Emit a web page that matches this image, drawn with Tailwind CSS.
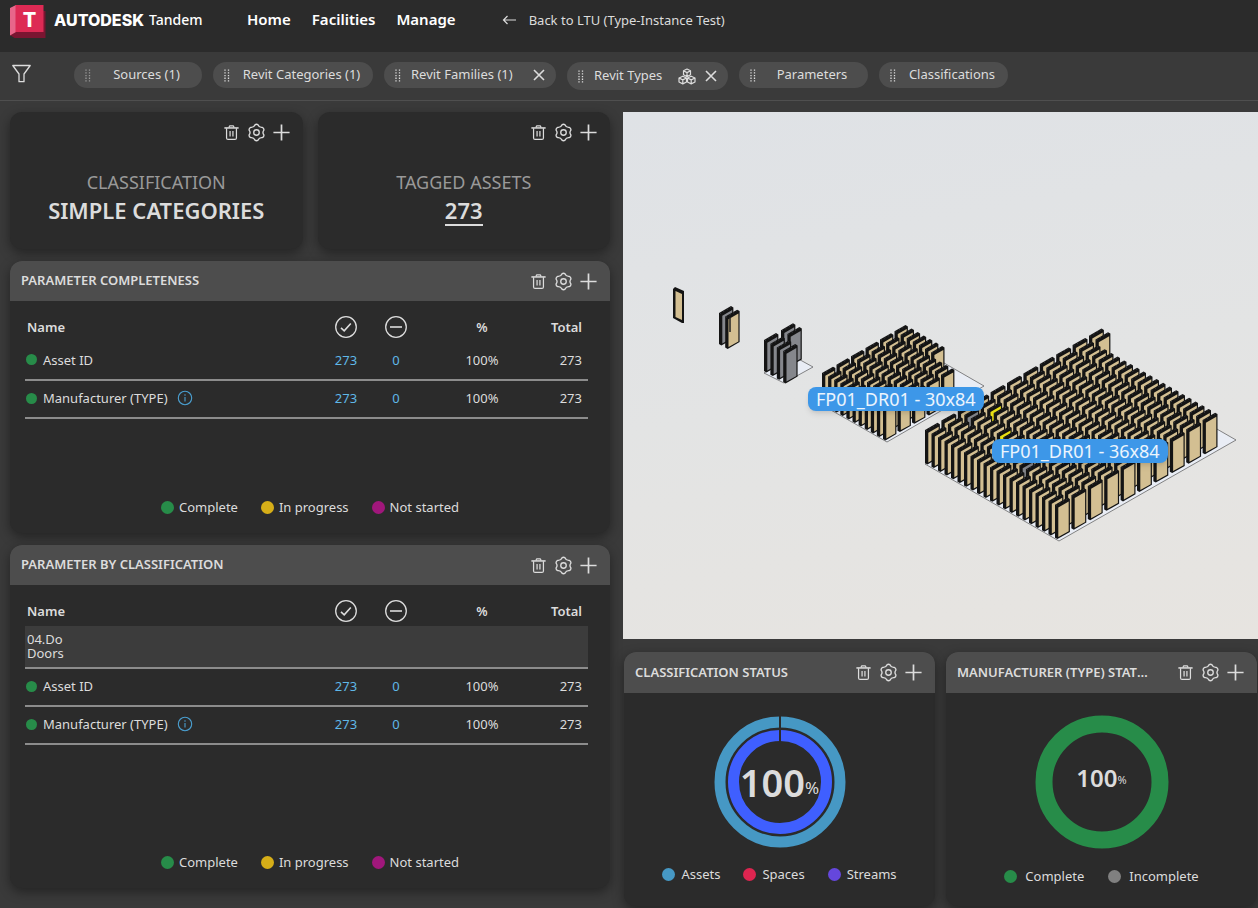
<!DOCTYPE html>
<html lang="en">
  <head>
    <meta charset="utf-8" />
    <meta name="viewport" content="width=device-width, initial-scale=1" />
    <title>Autodesk Tandem - Dashboard</title>
    <script src="https://cdn.jsdelivr.net/npm/@tailwindcss/browser@4"></script>
  </head>
  <body class="min-h-screen bg-[#3a3a3a] font-['Noto_Sans',sans-serif] text-[13px] leading-4 text-[#dcdcdc]">
    <!-- Icon sprite -->
    <svg class="hidden" aria-hidden="true">
      <symbol id="i-trash" viewBox="0 0 20 20">
        <g fill="none" stroke="currentColor" stroke-width="1.3" stroke-linejoin="round">
          <path d="M2.500 5.200h15" stroke-width="1.6" />
          <path d="M7.300 4.800 8 3h4l.7 1.800M4.800 5.500v10.200q0 1.600 1.600 1.600h7.200q1.600 0 1.600-1.600V5.500M8.500 8.500v5.600M11.500 8.500v5.600" />
        </g>
      </symbol>
      <symbol id="i-gear" viewBox="-10 -10 20 20">
        <g fill="none" stroke="currentColor" stroke-width="1.4" stroke-linejoin="round">
          <path d="M-1.66-8.02Q0-9.300 1.660-8.020Q2.900-5.020 6.100-5.450Q8.050-4.650 7.780-2.570Q5.800 0 7.780 2.570Q8.050 4.650 6.100 5.450Q2.900 5.020 1.660 8.020Q0 9.300-1.660 8.020Q-2.900 5.020-6.100 5.450Q-8.050 4.650-7.780 2.570Q-5.800 0-7.780-2.570Q-8.050-4.650-6.100-5.450Q-2.900-5.020-1.660-8.020Z" />
          <circle r="2.900" />
        </g>
      </symbol>
      <symbol id="i-plus" viewBox="0 0 20 20">
        <path d="M10 1.500v17M1.500 10h17" fill="none" stroke="currentColor" stroke-width="1.8" />
      </symbol>
      <symbol id="i-close" viewBox="0 0 12 12">
        <path d="M1 1l10 10M11 1 1 11" fill="none" stroke="currentColor" stroke-width="1.6" />
      </symbol>
      <symbol id="i-grip" viewBox="0 0 6 13">
        <path d="M1 .5v13M4.500 .5v13" fill="none" stroke="currentColor" stroke-width="1.3" stroke-dasharray="1.3 1.4" />
      </symbol>
      <symbol id="i-check" viewBox="0 0 24 24">
        <g fill="none" stroke="currentColor" stroke-width="1.3">
          <circle cx="12" cy="12" r="10.300" />
          <path d="M7 12.800l3.200 3 6.600-7.300" stroke-width="1.6" />
        </g>
      </symbol>
      <symbol id="i-minus" viewBox="0 0 24 24">
        <g fill="none" stroke="currentColor" stroke-width="1.3">
          <circle cx="12" cy="12" r="10.300" />
          <path d="M6 12h12" stroke-width="1.6" />
        </g>
      </symbol>
      <symbol id="i-info" viewBox="0 0 16 16">
        <g fill="none" stroke="currentColor" stroke-width="1.1">
          <circle cx="8" cy="8" r="6.700" />
          <path d="M8 7v4.600M8 4.300v1.400" />
        </g>
      </symbol>
      <symbol id="i-cubes" viewBox="0 0 18 17">
        <g fill="none" stroke="currentColor" stroke-width="1.2" stroke-linejoin="round">
          <path d="M9 1l3.500 1.800v4L9 8.600 5.500 6.800v-4zM5.500 2.800 9 4.600l3.500-1.800M9 4.600v4" />
          <path d="M4.800 8.200l3.700 1.800v4l-3.700 1.900L1 14v-4zM1 10l3.800 1.900L8.500 10M4.800 11.900v4" />
          <path d="M13.200 8.200L17 10v4l-3.800 1.900L9.500 14v-4zM9.500 10l3.700 1.900L17 10M13.200 11.900v4" />
        </g>
      </symbol>
    </svg>

    <!-- Top bar -->
    <header class="flex h-[52px] items-center bg-[#2b2b2b] pb-3 pl-[10px]">
      <svg class="mt-1 h-9 w-9 shrink-0" viewBox="0 0 36 34">
        <path d="M3 27h24V6h8.500v27H4.500L0 30z" fill="#7a1531" />
        <path d="M0 3 6 0v27l-6 3.500z" fill="#e8668a" />
        <path d="M5.500 0H33.500v27H5.500z" fill="#dd2a54" />
        <text x="19.500" y="22" text-anchor="middle" fill="#fff" font-family="Inter, sans-serif" font-weight="800" font-size="20">T</text>
      </svg>
      <div class="ml-2 flex w-[193px] items-center gap-[5px] text-white">
        <span class="font-['Inter',sans-serif] text-[16px] font-extrabold">AUTODESK</span>
        <span class="text-[14px] font-medium">Tandem</span>
      </div>
      <nav class="flex gap-[21px] pb-0.5 text-[15px] font-semibold text-white">
        <a href="#">Home</a>
        <a href="#">Facilities</a>
        <a href="#">Manage</a>
      </nav>
      <a href="#" class="ml-[46px] flex items-center gap-[13px]">
        <svg class="h-3 w-[14px]" viewBox="0 0 14 12" fill="none" stroke="currentColor" stroke-width="1.2"><path d="M14 6H1.500M5.500 2l-4 4 4 4" /></svg>
        Back to LTU (Type-Instance Test)
      </a>
    </header>

    <!-- Filter bar -->
    <div class="flex h-[49px] items-start border-b border-[#4f4f4f] pt-[10px] pl-3">
      <button class="mt-0.5 mr-[43px]" aria-label="Filter">
        <svg class="block h-5 w-[19px]" viewBox="0 0 19 20" fill="none" stroke="currentColor" stroke-width="1.3" stroke-linejoin="round"><path d="M.8 1.500h17.400l-6.200 8.500v7.700H7V10z" /></svg>
      </button>
      <div class="flex items-start gap-[11px]">
        <button class="flex h-[26px] w-[128px] items-center rounded-full bg-[#4d4d4d] pl-[11px]">
          <svg class="h-[13px] w-[6px] text-[#999]"><use href="#i-grip" /></svg><span class="flex-1 pb-0.5">Sources (1)</span>
        </button>
        <button class="flex h-[26px] w-[160px] items-center rounded-full bg-[#4d4d4d] pl-[11px]">
          <svg class="h-[13px] w-[6px]"><use href="#i-grip" /></svg><span class="flex-1 pb-0.5">Revit Categories (1)</span>
        </button>
        <div class="flex h-[26px] w-[172px] items-center rounded-full bg-[#4d4d4d] pr-[11px] pl-[11px]">
          <svg class="h-[13px] w-[6px]"><use href="#i-grip" /></svg><span class="flex-1 pb-0.5 pl-[10px]">Revit Families (1)</span>
          <button aria-label="Remove Revit Families"><svg class="block h-3 w-3"><use href="#i-close" /></svg></button>
        </div>
        <div class="flex h-7 w-[161px] items-center rounded-full bg-[#4d4d4d] pr-[11px] pl-[11px]">
          <svg class="h-[13px] w-[6px]"><use href="#i-grip" /></svg><span class="flex-1 pb-0.5 pl-[10px]">Revit Types</span>
          <button class="mr-[9px]" aria-label="Group by type"><svg class="block h-[17px] w-[18px]"><use href="#i-cubes" /></svg></button>
          <button aria-label="Remove Revit Types"><svg class="block h-3 w-3"><use href="#i-close" /></svg></button>
        </div>
        <button class="flex h-[26px] w-[129px] items-center rounded-full bg-[#4d4d4d] pl-[11px]">
          <svg class="h-[13px] w-[6px]"><use href="#i-grip" /></svg><span class="flex-1 pb-0.5">Parameters</span>
        </button>
        <button class="flex h-[26px] w-[129px] items-center rounded-full bg-[#4d4d4d] pl-[11px]">
          <svg class="h-[13px] w-[6px]"><use href="#i-grip" /></svg><span class="flex-1 pb-0.5">Classifications</span>
        </button>
      </div>
    </div>

    <main class="grid grid-cols-[600fr_635fr] gap-[13px] pt-[11px] pl-[10px]">
      <!-- Left column -->
      <div class="flex flex-col gap-3">
        <div class="grid grid-cols-2 gap-[15px]">
          <section class="h-[137px] rounded-xl bg-[#2b2b2b] pt-2 text-center shadow-[0_4px_12px_rgba(0,0,0,0.4)]">
            <div class="flex justify-end pr-[9px]" data-tools></div>
            <h2 class="mt-[25px] text-[18px] leading-6 text-[#999]">CLASSIFICATION</h2>
            <p class="mt-0.5 text-[22px] leading-7 font-semibold">SIMPLE CATEGORIES</p>
          </section>
          <section class="h-[137px] rounded-xl bg-[#2b2b2b] pt-2 text-center shadow-[0_4px_12px_rgba(0,0,0,0.4)]">
            <div class="flex justify-end pr-[9px]" data-tools></div>
            <h2 class="mt-[25px] text-[18px] leading-6 text-[#999]">TAGGED ASSETS</h2>
            <a href="#" class="mt-0.5 inline-block border-b-2 border-[#dcdcdc] text-[22px] leading-7 font-semibold">273</a>
          </section>
        </div>

        <section class="flex h-[272px] flex-col rounded-xl bg-[#2b2b2b] shadow-[0_4px_12px_rgba(0,0,0,0.4)]">
          <div class="flex h-10 items-center justify-between rounded-t-xl bg-[#4d4d4d] pr-[9px] pl-[11px]">
            <h2 class="pb-0.5 font-semibold">PARAMETER COMPLETENESS</h2>
            <div class="flex" data-tools></div>
          </div>
          <div class="flex-1 pt-[10px] pr-[22px] pl-[15px]">
            <table class="w-full table-fixed">
              <colgroup><col /><col class="w-[62px]" /><col class="w-[38px]" /><col class="w-[134px]" /><col class="w-[39px]" /></colgroup>
              <thead>
                <tr class="h-[31px]">
                  <th class="pl-0.5 text-left font-semibold">Name</th>
                  <th aria-label="Complete"><svg class="mx-auto h-6 w-6"><use href="#i-check" /></svg></th>
                  <th aria-label="Not started"><svg class="mx-auto h-6 w-6"><use href="#i-minus" /></svg></th>
                  <th class="font-semibold">%</th>
                  <th><div class="flex justify-end pr-[6px] font-semibold">Total</div></th>
                </tr>
              </thead>
              <tbody class="text-center">
                <tr class="h-[38px] border-b-2 border-[#8c8c8c]">
                  <td class="pb-0.5"><div class="flex items-center pl-px"><span class="mr-[6px] h-[11px] w-[11px] rounded-full bg-[#278c49]"></span>Asset ID</div></td>
                  <td class="pb-0.5"><a href="#" class="text-[#5fb8e8]">273</a></td>
                  <td class="pb-0.5"><a href="#" class="text-[#5fb8e8]">0</a></td>
                  <td class="pb-0.5">100%</td>
                  <td class="pr-[6px] pb-0.5 text-right">273</td>
                </tr>
                <tr class="h-[38px] border-b-2 border-[#8c8c8c]">
                  <td class="pb-0.5"><div class="flex items-center pl-px"><span class="mr-[6px] h-[11px] w-[11px] rounded-full bg-[#278c49]"></span>Manufacturer (TYPE)<svg class="ml-[9px] h-4 w-4 text-[#4a9fd0]"><use href="#i-info" /></svg></div></td>
                  <td class="pb-0.5"><a href="#" class="text-[#5fb8e8]">273</a></td>
                  <td class="pb-0.5"><a href="#" class="text-[#5fb8e8]">0</a></td>
                  <td class="pb-0.5">100%</td>
                  <td class="pr-[6px] pb-0.5 text-right">273</td>
                </tr>
              </tbody>
            </table>
          </div>
          <ul class="flex justify-center gap-[23px] pb-[18px]">
            <li class="flex items-center gap-[5px]"><span class="h-[13px] w-[13px] rounded-full bg-[#278c49]"></span>Complete</li>
            <li class="flex items-center gap-[5px]"><span class="h-[13px] w-[13px] rounded-full bg-[#d6ae18]"></span>In progress</li>
            <li class="flex items-center gap-[5px]"><span class="h-[13px] w-[13px] rounded-full bg-[#a0177b]"></span>Not started</li>
          </ul>
        </section>

        <section class="flex h-[343px] flex-col rounded-xl bg-[#2b2b2b] shadow-[0_4px_12px_rgba(0,0,0,0.4)]">
          <div class="flex h-10 items-center justify-between rounded-t-xl bg-[#4d4d4d] pr-[9px] pl-[11px]">
            <h2 class="pb-0.5 font-semibold">PARAMETER BY CLASSIFICATION</h2>
            <div class="flex" data-tools></div>
          </div>
          <div class="flex-1 pt-[10px] pr-[22px] pl-[15px]">
            <table class="w-full table-fixed">
              <colgroup><col /><col class="w-[62px]" /><col class="w-[38px]" /><col class="w-[134px]" /><col class="w-[39px]" /></colgroup>
              <thead>
                <tr class="h-[31px]">
                  <th class="pl-0.5 text-left font-semibold">Name</th>
                  <th aria-label="Complete"><svg class="mx-auto h-6 w-6"><use href="#i-check" /></svg></th>
                  <th aria-label="Not started"><svg class="mx-auto h-6 w-6"><use href="#i-minus" /></svg></th>
                  <th class="font-semibold">%</th>
                  <th><div class="flex justify-end pr-[6px] font-semibold">Total</div></th>
                </tr>
              </thead>
              <tbody class="text-center">
                <tr class="h-[42px] border-b-2 border-[#8c8c8c] bg-[#3c3c3c]">
                  <td colspan="5" class="pb-0.5 pl-0.5 text-left leading-[14px]">04.Do<br />Doors</td>
                </tr>
                <tr class="h-[38px] border-b-2 border-[#8c8c8c]">
                  <td class="pb-0.5"><div class="flex items-center pl-px"><span class="mr-[6px] h-[11px] w-[11px] rounded-full bg-[#278c49]"></span>Asset ID</div></td>
                  <td class="pb-0.5"><a href="#" class="text-[#5fb8e8]">273</a></td>
                  <td class="pb-0.5"><a href="#" class="text-[#5fb8e8]">0</a></td>
                  <td class="pb-0.5">100%</td>
                  <td class="pr-[6px] pb-0.5 text-right">273</td>
                </tr>
                <tr class="h-[38px] border-b-2 border-[#8c8c8c]">
                  <td class="pb-0.5"><div class="flex items-center pl-px"><span class="mr-[6px] h-[11px] w-[11px] rounded-full bg-[#278c49]"></span>Manufacturer (TYPE)<svg class="ml-[9px] h-4 w-4 text-[#4a9fd0]"><use href="#i-info" /></svg></div></td>
                  <td class="pb-0.5"><a href="#" class="text-[#5fb8e8]">273</a></td>
                  <td class="pb-0.5"><a href="#" class="text-[#5fb8e8]">0</a></td>
                  <td class="pb-0.5">100%</td>
                  <td class="pr-[6px] pb-0.5 text-right">273</td>
                </tr>
              </tbody>
            </table>
          </div>
          <ul class="flex justify-center gap-[23px] pb-[18px]">
            <li class="flex items-center gap-[5px]"><span class="h-[13px] w-[13px] rounded-full bg-[#278c49]"></span>Complete</li>
            <li class="flex items-center gap-[5px]"><span class="h-[13px] w-[13px] rounded-full bg-[#d6ae18]"></span>In progress</li>
            <li class="flex items-center gap-[5px]"><span class="h-[13px] w-[13px] rounded-full bg-[#a0177b]"></span>Not started</li>
          </ul>
        </section>
      </div>

      <!-- Right column -->
      <div class="flex min-w-0 flex-col gap-[13px]">
        <!-- 3D viewer -->
        <div class="relative h-[527px] overflow-hidden bg-linear-170 from-[#dfe2e6] via-[#e3e4e4] to-[#e7e4e0]">
          <svg id="scene" class="block h-full w-full" viewBox="623 112 635 527" preserveAspectRatio="xMinYMin slice" role="img" aria-label="Model view"></svg>
          <div class="absolute top-[275px] left-[185px] rounded-lg bg-[#3d97e8] px-2 text-[18px] leading-6 whitespace-nowrap text-white/90 shadow-md">FP01_DR01 - 30x84</div>
          <div class="absolute top-[327px] left-[369px] rounded-lg bg-[#3d97e8] px-2 text-[18px] leading-6 whitespace-nowrap text-white/90 shadow-md">FP01_DR01 - 36x84</div>
        </div>

        <div class="grid grid-cols-2 gap-[11px] px-px">
          <section class="h-[254px] rounded-xl bg-[#2b2b2b] shadow-[0_4px_12px_rgba(0,0,0,0.4)]">
            <div class="flex h-[41px] items-center justify-between rounded-t-xl bg-[#4d4d4d] pr-[9px] pl-[11px]">
              <h2 class="truncate pb-0.5 font-semibold">CLASSIFICATION STATUS</h2>
              <div class="flex shrink-0" data-tools></div>
            </div>
            <div class="relative mt-[22px]">
              <svg class="mx-auto block h-[134px] w-[134px]" viewBox="0 0 134 134" fill="none">
                <circle cx="67" cy="67" r="60" stroke="#4698c4" stroke-width="11" />
                <circle cx="67" cy="67" r="46.500" stroke="#3f5fff" stroke-width="11" />
                <path d="M67 0v30" stroke="#2b2b2b" stroke-width="2" />
              </svg>
              <div class="absolute inset-0 flex items-center justify-center"><span class="text-[38px] font-semibold">100</span><span class="pt-3 text-[17px]">%</span></div>
            </div>
            <ul class="mt-[17px] flex justify-center gap-[23px]">
              <li class="flex items-center gap-[6px]"><span class="h-[13px] w-[13px] rounded-full bg-[#4698c4]"></span>Assets</li>
              <li class="flex items-center gap-[6px]"><span class="h-[13px] w-[13px] rounded-full bg-[#dd2550]"></span>Spaces</li>
              <li class="flex items-center gap-[6px]"><span class="h-[13px] w-[13px] rounded-full bg-[#6547dc]"></span>Streams</li>
            </ul>
          </section>

          <section class="h-[254px] rounded-xl bg-[#2b2b2b] shadow-[0_4px_12px_rgba(0,0,0,0.4)]">
            <div class="flex h-[41px] items-center justify-between rounded-t-xl bg-[#4d4d4d] pr-[9px] pl-[11px]">
              <h2 class="w-[192px] truncate pb-0.5 font-semibold">MANUFACTURER (TYPE) STATUS</h2>
              <div class="flex shrink-0" data-tools></div>
            </div>
            <div class="relative mt-[22px]">
              <svg class="mx-auto block h-[134px] w-[134px]" viewBox="0 0 134 134" fill="none">
                <circle cx="67" cy="67" r="58" stroke="#278c49" stroke-width="17" />
              </svg>
              <div class="absolute inset-0 flex items-center justify-center pb-2"><span class="text-[24px] font-semibold">100</span><span class="pt-1 text-[11px]">%</span></div>
            </div>
            <ul class="mt-[19px] flex justify-center gap-[24px]">
              <li class="flex items-center gap-2"><span class="h-[13px] w-[13px] rounded-full bg-[#278c49]"></span>Complete</li>
              <li class="flex items-center gap-2"><span class="h-[13px] w-[13px] rounded-full bg-[#808080]"></span>Incomplete</li>
            </ul>
          </section>
        </div>
      </div>
    </main>

    <script>
      /* ---------- Card tool buttons ---------- */
      const tools = [["trash", "Delete"], ["gear", "Settings"], ["plus", "Add"]];
      document.querySelectorAll("[data-tools]").forEach(el => {
        el.innerHTML = tools.map(([icon, label]) => `
          <button class="flex h-[25px] w-[25px] items-center justify-center" aria-label="${label}">
            <svg class="h-[19px] w-[19px]"><use href="#i-${icon}" /></svg>
          </button>`).join("");
      });

      /* ---------- Isometric door model ---------- */
      const SLOPE = 0.575;
      const TAN = "#d3bf92";
      const GREY = "#85878c";
      const pts = list => list.map(p => p.map(n => n.toFixed(1)).join(",")).join(" ");

      // x, y is the back left corner of the door at floor level
      function door(x, y, w, h, color) {
        const t = 2.4;
        const s = t * SLOPE;
        const r = w * SLOPE;
        const shell = [[x, y], [x, y - h], [x + w, y - h - r], [x + w + t, y - h - r + s], [x + w + t, y - r + s], [x + t, y + s]];
        const fx = x + t;
        const fy = y + s;
        const face = [[fx + 0.9, fy - 2], [fx + 0.9, fy - h + 1.4], [fx + w - 1.2, fy - h - r + 2.6], [fx + w - 1.2, fy - r - 0.6]];
        return `<polygon points="${pts(shell)}" fill="#141414"/>` +
          `<polygon points="${pts(face)}" fill="${color}"/>` +
          `<path d="M${x + 1} ${y - h + 0.6}l${w - 1} ${-r + 0.5}" stroke="#5d6068" stroke-width=".6" stroke-dasharray="1 3"/>`;
      }

      function floor(points) {
        return `<polygon points="${points}" fill="#e9edf5" stroke="#555" stroke-width=".7"/>`;
      }

      function cluster(c) {
        const doors = [];
        c.rows.forEach((count, col) => {
          for (let row = 0; row < count; row++) {
            doors.push({
              x: c.x + col * c.stepX + row * c.stack,
              y: c.y - col * c.stepX * SLOPE + row * c.stack * SLOPE,
              color: (c.special && c.special[col + "," + row]) || c.color
            });
          }
        });
        doors.sort((a, b) => a.y - b.y);
        return doors.map(d => door(d.x, d.y, c.w, c.h, d.color)).join("");
      }

      document.getElementById("scene").innerHTML =
        `<polygon points="673,289 675,287 684,291 684,323 682,323 673,318" fill="#141414"/>
         <polygon points="675.5,291 682,294 682,320 675.5,317" fill="${TAN}"/>` +
        cluster({ x: 719, y: 344, stepX: 14, stack: 6.2, w: 12, h: 31, color: TAN, rows: [2], special: { "0,0": GREY } }) +
        `<path d="M730 317v15" stroke="#222" stroke-width="1.500"/>` +
        floor("764,373 784,383 813,367 793,356") +
        cluster({ x: 764, y: 371, stepX: 17, stack: 6.4, w: 12, h: 31, color: GREY, rows: [4, 2] }) +
        floor("822,405 887,442 984,386 918,348") +
        cluster({ x: 822, y: 404, stepX: 14.5, stack: 6.1, w: 11, h: 31, color: TAN, rows: [11, 11, 11, 11, 11, 7] }) +
        floor("925,464 1059,541 1236,440 1102,363") +
        cluster({
          x: 925, y: 463, stepX: 16.4, stack: 6.5, w: 12.5, h: 33, color: TAN,
          rows: [21, 21, 21, 21, 21, 21, 21, 21, 21, 21, 2],
          special: { "3,2": "#e8df14", "2,6": "#e8df14", "2,1": GREY, "1,12": GREY }
        });
    </script>
  </body>
</html>
